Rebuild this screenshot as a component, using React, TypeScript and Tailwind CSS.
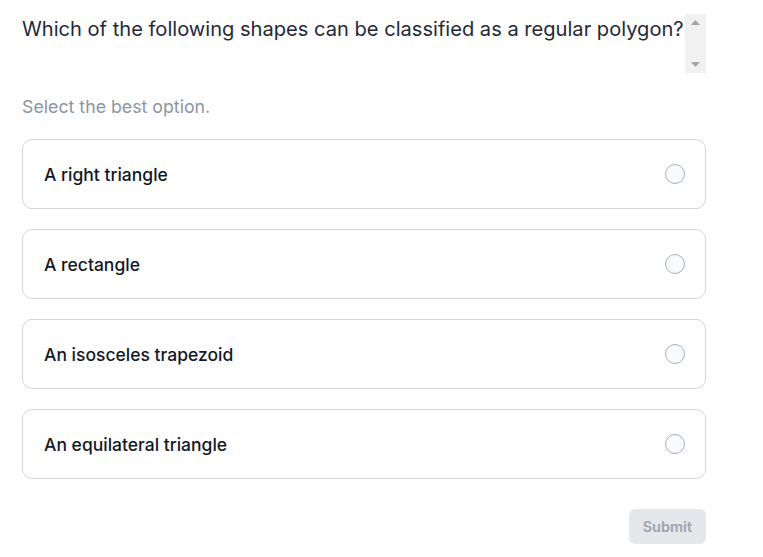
import React, { useState } from 'react';

const OPTIONS = [
  'A right triangle',
  'A rectangle',
  'An isosceles trapezoid',
  'An equilateral triangle',
];

// fake always-on scrollbar, arrows only (content fits)
const ScrollTrack: React.FC = () => (
  <div className="flex w-[21px] shrink-0 flex-col items-center justify-between bg-[#f1f1f1] py-[6px]">
    <svg width="9" height="5" viewBox="0 0 9 5">
      <path d="M0 5 L4.5 0 L9 5 Z" fill="#a3a3a3" />
    </svg>
    <svg width="9" height="5" viewBox="0 0 9 5">
      <path d="M0 0 L4.5 5 L9 0 Z" fill="#a3a3a3" />
    </svg>
  </div>
);

export default function App() {
  const [selected, setSelected] = useState<number | null>(null);

  return (
    <div
      className="min-h-[557px] w-[763px] bg-white pl-[22px] pr-[57px] pt-[14px]"
      style={{ fontFamily: 'Inter, "Noto Sans", sans-serif' }}
    >
      {/* Question */}
      <div className="flex h-[59px]">
        <h2 className="flex-1 pt-[1px] text-[20.1px] leading-[28px] text-[#1f2937]">
          Which of the following shapes can be classified as a regular polygon?
        </h2>
        <ScrollTrack />
      </div>

      <p className="mt-[22px] text-[17.75px] leading-[24px] text-[#8b95a5]">Select the best option.</p>

      {/* Options */}
      <div className="mt-[20px] flex flex-col gap-[20px]">
        {OPTIONS.map((opt, i) => (
          <button
            key={opt}
            onClick={() => setSelected(i)}
            className="flex h-[70px] items-center justify-between rounded-[10px] border border-[#d4d6dc] bg-white pl-[21px] pr-[20px] pt-[2px] text-left"
          >
            <span className="text-[17.5px] font-medium text-[#111827]">{opt}</span>
            <span
              className={`-mt-[2px] h-[20px] w-[20px] rounded-full border ${
                selected === i ? 'border-[#3b82f6] bg-[#3b82f6]' : 'border-[#a7afbe] bg-[#f8fafc]'
              }`}
            />
          </button>
        ))}
      </div>

      <div className="mt-[30px] flex justify-end">
        <button
          disabled={selected === null}
          className="h-[35px] rounded-[6px] bg-[#e5e7eb] px-[14px] text-[14.5px] font-semibold text-[#9ca3af]"
        >
          Submit
        </button>
      </div>
    </div>
  );
}
